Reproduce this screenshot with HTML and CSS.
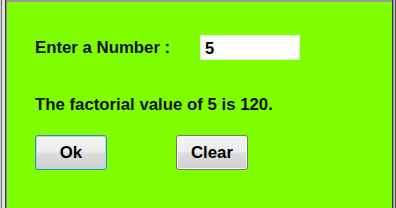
FILE: index.html
```html
<!DOCTYPE html>
<html>
<head>
    <title>Factorial</title>
    <link rel="stylesheet" href="styles.css">
</head>
<body>
    <div class="frame">
        <div class="edge-left"></div>
        <div class="form">
            <div class="row">
                <span class="label">Enter a Number :</span>
                <input class="number" type="text" value="5">
            </div>
            <div class="result">The factorial value of 5 is 120.</div>
            <div class="buttons">
                <button class="btn focused">Ok</button>
                <button class="btn">Clear</button>
            </div>
        </div>
        <div class="edge-right"></div>
    </div>
</body>
</html>
```

FILE: styles.css
```css
html, body {
    margin: 0;
    padding: 0;
    background: #80ff00;
}
body {
    width: 396px;
    height: 208px;
    overflow: hidden;
    font-family: 'Liberation Sans', Arial, sans-serif;
}
.frame {
    display: flex;
    height: 208px;
}
.edge-left {
    width: 7px;
    background: linear-gradient(to right, #d2d2d2 0, #d2d2d2 1px, #6a6a6a 1px, #6a6a6a 2px, #e4e4e4 2px, #e4e4e4 5px, #3a3a3a 5px, #3a3a3a 6px, #8a8a8a 6px);
}
.edge-right {
    width: 4px;
    background: linear-gradient(to right, #3c3c3c 0, #3c3c3c 1px, #8c8c8c 1px, #8c8c8c 2px, #c8c8c8 2px, #c8c8c8 3px, #505050 3px);
}
.form {
    flex: 1;
    box-sizing: border-box;
    background: #80ff00;
    border-top: 2px solid #9a9a9a;
    padding: 33px 0 0 28px;
    color: #0a1400;
    font-weight: bold;
    font-size: 16.8px;
}
.row {
    display: flex;
    align-items: center;
    height: 25px;
}
.label {
    width: 165px;
}
.number {
    width: 100px;
    height: 25px;
    box-sizing: border-box;
    border: 1px solid #e8f0e0;
    background: #fff;
    padding: 1px 4px 0;
    font-family: 'Liberation Sans', Arial, sans-serif;
    font-size: 16.5px;
    font-weight: bold;
    color: #000;
    outline: none;
}
.result {
    margin-top: 35px;
    height: 19px;
}
.buttons {
    display: flex;
    gap: 69px;
    margin-top: 21px;
}
.btn {
    width: 72px;
    height: 35px;
    border: 1px solid #6f7a66;
    border-radius: 3px;
    background: linear-gradient(to bottom, #f4f4f4 0, #ececec 48%, #dcdcdc 52%, #cfcfcf 100%);
    font-family: 'Liberation Sans', Arial, sans-serif;
    font-size: 16.8px;
    font-weight: bold;
    color: #000;
    padding: 0;
    box-shadow: inset 0 0 0 1px #fbfbfb;
}
.btn.focused {
    border-color: #3c8aa6;
    box-shadow: inset 0 0 0 1px #a8e0f0;
}
```
